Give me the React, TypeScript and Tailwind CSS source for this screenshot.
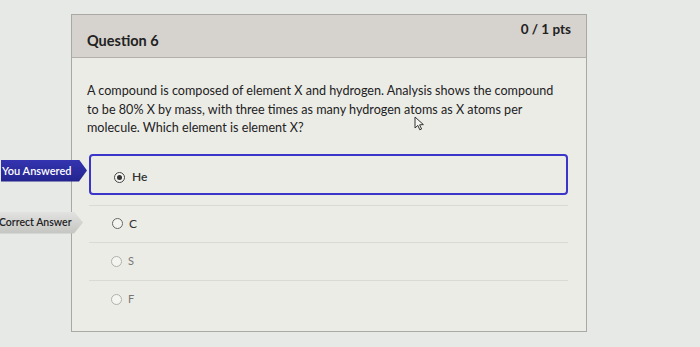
const font = { fontFamily: "Lato, 'Open Sans', sans-serif" };

function Radio({ checked, faded }: { checked?: boolean; faded?: boolean }) {
  return (
    <span
      className={`w-[11px] h-[11px] rounded-full border flex items-center justify-center bg-[#f4f4f1] ${
        checked ? "border-[#444]" : faded ? "border-[#b0b0ad]" : "border-[#666]"
      }`}
    >
      {checked && <span className="w-[5px] h-[5px] rounded-full bg-[#333]" />}
    </span>
  );
}

export default function App() {
  return (
    <div className="relative w-[700px] h-[347px] overflow-hidden bg-[#e6e9e6] pt-[14px] pl-[71px]" style={font}>
      <div className="w-[516px] h-[318px] border border-[#a8a8a4] bg-[#ecece7]">
        <div className="h-[43px] bg-[#d6d2cd] border-b border-[#b3afaa] flex justify-between px-[15px]">
          <h2 className="pt-[19px] text-[14.5px] font-bold text-[#222] leading-none">Question 6</h2>
          <span className="pt-[8px] text-[13.5px] font-bold text-[#222] leading-none">0 / 1 pts</span>
        </div>

        <div className="relative px-[15px] pt-[24px]">
          <p className="text-[12.6px] leading-[18.5px] text-[#222] whitespace-nowrap">
            A compound is composed of element X and hydrogen. Analysis shows the compound
            <br />
            to be 80% X by mass, with three times as many hydrogen atoms as X atoms per
            <br />
            molecule. Which element is element X?
          </p>
          <svg className="absolute left-[342px] top-[58px]" width="11" height="15" viewBox="0 0 11 15">
            <path d="M1 1 L1 12 L3.8 9.4 L5.8 13.8 L7.6 13 L5.6 8.8 L9.4 8.6 Z" fill="#f4f4f1" stroke="#333" strokeWidth="1" strokeLinejoin="round" />
          </svg>

          <div className="mt-[16px] ml-[2px] mr-[3px]">
            <div className="relative h-[41px] border-2 border-[#3b36c9] rounded-[4px] flex items-center gap-[7px] pl-[23px] pt-[6px]">
              <div className="absolute left-[-90px] top-[4px] h-[22px] w-[86px] bg-gradient-to-b from-[#3434b0] to-[#23238e] [clip-path:polygon(0_0,calc(100%-8px)_0,100%_50%,calc(100%-8px)_100%,0_100%)] flex items-center pl-[1px]">
                <span className="text-[11px] font-semibold text-white leading-none">You Answered</span>
              </div>
              <Radio checked />
              <span className="text-[12px] font-semibold text-[#333]">He</span>
            </div>

            <div className="mt-[10px] border-t border-[#dadad5]">
              <div className="relative h-[37px] flex items-center gap-[6px] pl-[23px] border-b border-[#dadad5]">
                <div className="absolute left-[-90px] top-[6px] h-[22px] w-[84px] bg-gradient-to-b from-[#e2e2e0] to-[#c4c4c1] [clip-path:polygon(0_0,calc(100%-9px)_0,100%_50%,calc(100%-9px)_100%,0_100%)] flex items-center">
                  <span className="text-[10.5px] font-semibold text-[#222] leading-none">Correct Answer</span>
                </div>
                <Radio />
                <span className="text-[12px] text-[#333]">C</span>
              </div>
              <div className="h-[38px] flex items-center gap-[6px] pl-[22px] border-b border-[#dadad5]">
                <Radio faded />
                <span className="text-[11px] text-[#777]">S</span>
              </div>
              <div className="h-[38px] flex items-center gap-[6px] pl-[22px]">
                <Radio faded />
                <span className="text-[11px] text-[#777]">F</span>
              </div>
            </div>
          </div>
        </div>
      </div>
    </div>
  );
}
